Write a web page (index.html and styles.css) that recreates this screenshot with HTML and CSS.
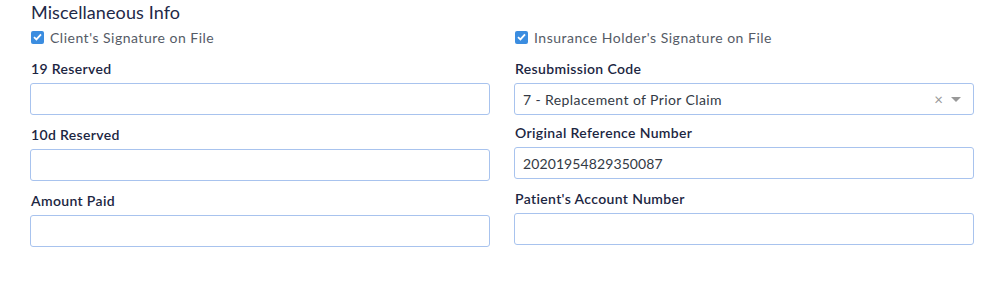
FILE: index.html
```html
<!DOCTYPE html>
<html lang="en">
<head>
<meta charset="UTF-8">
<title>Miscellaneous Info</title>
<link rel="stylesheet" href="styles.css">
</head>
<body>
	<div id="main">
		<h2 class="section-title">Miscellaneous Info</h2>

		<div class="form-grid">
			<div class="form-col">
				<label class="check">
					<span class="check-box"><svg width="9" height="8" viewBox="0 0 9 8"><path d="M1 4.2 L3.4 6.4 L8 1.4" fill="none" stroke="#fff" stroke-width="1.8"/></svg></span>
					Client's Signature on File
				</label>

				<div class="input-group">
					<label for="reserved19">19 Reserved</label>
					<input type="text" id="reserved19">
				</div>

				<div class="input-group">
					<label for="reserved10d">10d Reserved</label>
					<input type="text" id="reserved10d">
				</div>

				<div class="input-group">
					<label for="amountPaid">Amount Paid</label>
					<input type="text" id="amountPaid">
				</div>
			</div>

			<div class="form-col">
				<label class="check">
					<span class="check-box"><svg width="9" height="8" viewBox="0 0 9 8"><path d="M1 4.2 L3.4 6.4 L8 1.4" fill="none" stroke="#fff" stroke-width="1.8"/></svg></span>
					Insurance Holder's Signature on File
				</label>

				<div class="input-group select-group">
					<label>Resubmission Code</label>
					<div class="select">
						<span class="select-value">7 - Replacement of Prior Claim</span>
						<span class="select-clear">&times;</span>
						<span class="select-arrow"></span>
					</div>
				</div>

				<div class="input-group">
					<label for="origRef">Original Reference Number</label>
					<input type="text" id="origRef" value="20201954829350087">
				</div>

				<div class="input-group">
					<label for="accountNo">Patient's Account Number</label>
					<input type="text" id="accountNo">
				</div>
			</div>
		</div>
	</div>
</body>
</html>
```

FILE: styles.css
```css
body {
	font-family: Lato, 'Noto Sans', sans-serif;
	margin: 0;
	padding: 0;
	background-color: white;
	color: #1c2642;
}

#main {
	padding: 0 27px 0 30px;
}

.section-title {
	font-size: 18px;
	font-weight: normal;
	color: #1e2948;
	margin: 0;
	padding: 1px 0 0 1px;
	line-height: 22px;
	letter-spacing: 0.1px;
}

.form-grid {
	display: grid;
	grid-template-columns: 460px 460px;
	column-gap: 24px;
}

.form-col {
	display: flex;
	flex-direction: column;
}

.check {
	display: flex;
	align-items: center;
	gap: 6px;
	font-size: 14px;
	color: #555b66;
	height: 18px;
	margin: 5px 0 3px 1px;
	letter-spacing: 0.5px;
}

.check-box {
	width: 13px;
	height: 13px;
	border-radius: 2px;
	background-color: #3b8de0;
	display: flex;
	align-items: center;
	justify-content: center;
}

.input-group {
	display: flex;
	flex-direction: column;
	margin-top: 11px;
}

.select-group {
	margin-bottom: -2px;
}

.input-group label {
	display: block;
	font-size: 14px;
	font-weight: 600;
	color: #1c2642;
	line-height: 18px;
	margin: 0 0 5px 1px;
	letter-spacing: 0.35px;
}

.input-group input {
	box-sizing: border-box;
	width: 100%;
	height: 32px;
	padding: 0 8px;
	border: 1px solid #a8c3ee;
	border-radius: 3px;
	background-color: white;
	font-family: inherit;
	font-size: 14px;
	color: #333a45;
	letter-spacing: 0.1px;
}

.select {
	box-sizing: border-box;
	height: 32px;
	border: 1px solid #a8c3ee;
	border-radius: 3px;
	display: flex;
	align-items: center;
	padding: 0 12px 0 8px;
	font-size: 14px;
	color: #333a45;
}

.select-value {
	flex: 1;
	letter-spacing: 0.4px;
}

.select-clear {
	color: #999;
	font-size: 15px;
	margin-right: 8px;
}

.select-arrow {
	width: 0;
	height: 0;
	border-left: 5px solid transparent;
	border-right: 5px solid transparent;
	border-top: 5px solid #999;
}
```
